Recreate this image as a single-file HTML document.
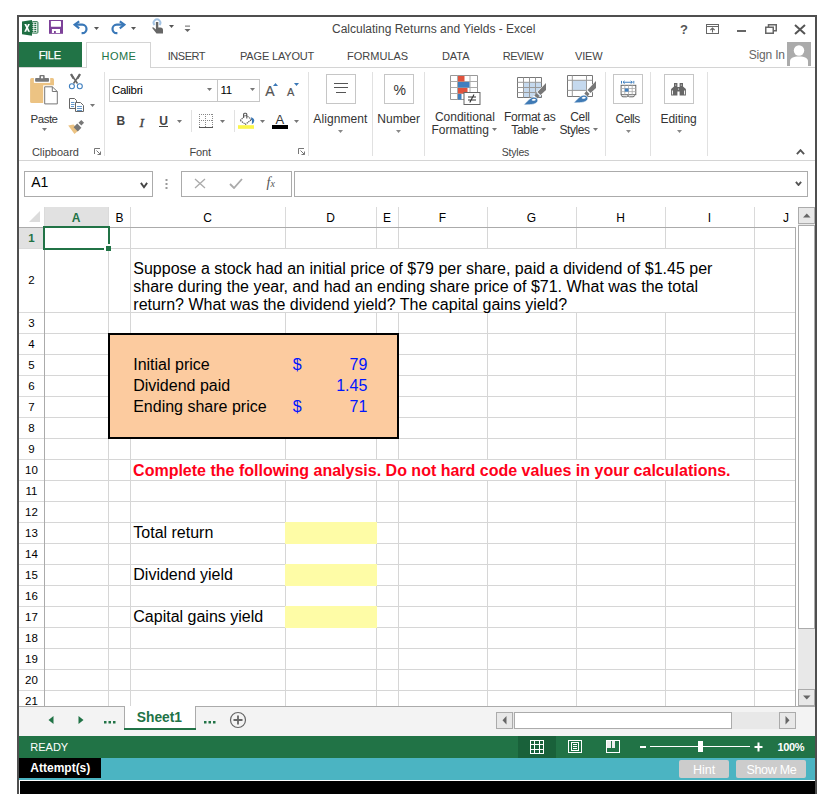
<!DOCTYPE html>
<html><head><meta charset="utf-8">
<style>
*{margin:0;padding:0;box-sizing:border-box}
html,body{width:832px;height:794px;overflow:hidden;background:#fff;font-family:"Liberation Sans",sans-serif;}
.a{position:absolute;display:block}
.t{position:absolute;white-space:nowrap;line-height:1}
</style></head>
<body>

<div class="a" style="left:17px;top:15px;width:800px;height:2px;background:#4f4f4f;"></div>
<div class="a" style="left:17px;top:15px;width:2px;height:779px;background:#4f4f4f;"></div>
<div class="a" style="left:815px;top:15px;width:2px;height:779px;background:#4f4f4f;"></div>
<svg class="a" style="left:21px;top:19px;" width="18" height="18" viewBox="0 0 18 18">
<rect x="10.9" y="2.7" width="6" height="11.4" rx="0.8" fill="#fff" stroke="#1e6e42" stroke-width="1"/>
<path d="M11 4.4H12.4M11 6.4H12.4M11 8.4H12.4M11 10.4H12.4M11 12.4H12.4M13.3 4.4H15.3M13.3 6.4H15.3M13.3 8.4H15.3M13.3 10.4H15.3M13.3 12.4H15.3" stroke="#1e6e42" stroke-width="1.1"/>
<path d="M1 2.5L11 0.9V16.8L1 15.2Z" fill="#1e6e42"/>
<path d="M3.3 5H5.3L6.1 7.3L7 5H8.9L7.1 8.85L9 12.7H7L6.1 10.3L5.2 12.7H3.2L5.1 8.85Z" fill="#fff"/>
</svg>
<svg class="a" style="left:49px;top:20px;" width="14" height="14" viewBox="0 0 14 14">
<path d="M0 0H14V13.8H0Z" fill="#7d4199"/>
<rect x="1.9" y="1" width="10.1" height="5.8" rx="0.6" fill="#fff"/>
<rect x="2.9" y="9" width="8.1" height="4" fill="#fff"/>
<rect x="5" y="11" width="1.8" height="2" fill="#7d4199"/>
</svg>
<svg class="a" style="left:73px;top:20px;" width="16" height="15" viewBox="0 0 16 15">
<path d="M6.2 1.4L1.6 4.7L6.2 8.3" fill="none" stroke="#3a78b8" stroke-width="2.1" stroke-linejoin="miter"/>
<path d="M2.2 4.7H9.3A4.2 4.2 0 0 1 9.3 13.1H8.6" fill="none" stroke="#3a78b8" stroke-width="2.2"/>
</svg>
<svg class="a" style="left:94px;top:27px;" width="5" height="3" viewBox="0 0 5 3"><path d="M0 0H5L2.5 3Z" fill="#555"/></svg>
<svg class="a" style="left:110px;top:20px;" width="16" height="15" viewBox="0 0 16 15">
<path d="M9.8 1.4L14.4 4.7L9.8 8.3" fill="none" stroke="#3a78b8" stroke-width="2.1" stroke-linejoin="miter"/>
<path d="M13.8 4.7H6.7A4.2 4.2 0 0 0 6.7 13.1H7.4" fill="none" stroke="#3a78b8" stroke-width="2.2"/>
</svg>
<svg class="a" style="left:131px;top:27px;" width="5" height="3" viewBox="0 0 5 3"><path d="M0 0H5L2.5 3Z" fill="#555"/></svg>
<svg class="a" style="left:151px;top:17px;" width="14" height="18" viewBox="0 0 14 18">
<path d="M3.6 8A3.3 3.3 0 1 1 8.4 8" fill="none" stroke="#a3c3e3" stroke-width="2"/>
<rect x="4.9" y="5" width="2.4" height="9" fill="#666"/>
<path d="M1 10.8L2.2 10.2L5 12.5V10.5H9.5Q12 10.5 12 13V16.5H5.5Z" fill="#666"/>
</svg>
<svg class="a" style="left:169px;top:25px;" width="5" height="3" viewBox="0 0 5 3"><path d="M0 0H5L2.5 3Z" fill="#555"/></svg>
<svg class="a" style="left:184px;top:25px;" width="7" height="8" viewBox="0 0 7 8"><rect x="1" y="0.6" width="5" height="1" fill="#666"/><path d="M0.5 4H6.5L3.5 7Z" fill="#666"/></svg>
<div class="t" style="left:332px;top:22.74px;font-size:12px;color:#444;font-weight:normal;">Calculating Returns and Yields - Excel</div>
<div class="t" style="left:680px;top:22.60px;font-size:13px;color:#555;font-weight:bold;">?</div>
<svg class="a" style="left:706px;top:24px;" width="13" height="10" viewBox="0 0 13 10"><rect x="0.5" y="0.5" width="12" height="9" fill="none" stroke="#666"/><path d="M0.5 2.5H12.5" stroke="#666"/><path d="M6.5 8.5V4M4.3 6.2L6.5 4L8.7 6.2" fill="none" stroke="#666" stroke-width="1.1"/></svg>
<div class="a" style="left:737px;top:30px;width:9px;height:2px;background:#666;"></div>
<svg class="a" style="left:765px;top:24px;" width="12" height="10" viewBox="0 0 12 10"><rect x="0.75" y="3.25" width="7.5" height="6" fill="none" stroke="#666" stroke-width="1.5"/><path d="M3.5 3V0.75H11.25V6.75H8.5" fill="none" stroke="#666" stroke-width="1.5"/></svg>
<svg class="a" style="left:794px;top:24px;" width="12" height="11" viewBox="0 0 12 11"><path d="M1 1L11 10M11 1L1 10" stroke="#555" stroke-width="2"/></svg>
<div class="a" style="left:19px;top:42px;width:63px;height:25px;background:#217346;"></div>
<div class="t" style="left:38.7px;top:49.69px;font-size:11px;color:#fff;font-weight:normal;letter-spacing:-0.3px;-webkit-text-stroke:0.25px #fff">FILE</div>
<div class="a" style="left:86px;top:42px;width:65px;height:26px;border:1px solid #d4d4d4;border-bottom:none;background:#fff"></div>
<div class="t" style="left:101.5px;top:51.29px;font-size:11px;color:#217346;font-weight:normal;letter-spacing:0.45px">HOME</div>
<div class="t" style="left:167.7px;top:51.29px;font-size:11px;color:#444;font-weight:normal;letter-spacing:-0.45px">INSERT</div>
<div class="t" style="left:240px;top:51.29px;font-size:11px;color:#444;font-weight:normal;letter-spacing:-0.17px">PAGE LAYOUT</div>
<div class="t" style="left:347.1px;top:51.29px;font-size:11px;color:#444;font-weight:normal;letter-spacing:0px">FORMULAS</div>
<div class="t" style="left:441.9px;top:51.29px;font-size:11px;color:#444;font-weight:normal;letter-spacing:0px">DATA</div>
<div class="t" style="left:502.7px;top:51.29px;font-size:11px;color:#444;font-weight:normal;letter-spacing:-0.5px">REVIEW</div>
<div class="t" style="left:574.9px;top:51.29px;font-size:11px;color:#444;font-weight:normal;letter-spacing:-0.1px">VIEW</div>
<div class="t" style="left:748.8px;top:48.54px;font-size:12px;color:#666;font-weight:normal;letter-spacing:-0.2px">Sign In</div>
<svg class="a" style="left:787px;top:42px;" width="24" height="24" viewBox="0 0 24 24"><rect width="24" height="24" fill="#ababab"/><circle cx="12" cy="8.5" r="5.2" fill="#fff"/><path d="M3 24V19.5C3 16 6 14.5 12 14.5S21 16 21 19.5V24Z" fill="#fff"/></svg>
<div class="a" style="left:151px;top:67px;width:664px;height:1px;background:#d4d4d4;"></div>
<div class="a" style="left:19px;top:67px;width:67px;height:1px;background:#d4d4d4;"></div>
<div class="a" style="left:19px;top:160px;width:796px;height:1px;background:#d4d4d4;"></div>
<div class="a" style="left:104px;top:72px;width:1px;height:84px;background:#e1e1e1;"></div>
<div class="a" style="left:308px;top:72px;width:1px;height:84px;background:#e1e1e1;"></div>
<div class="a" style="left:372px;top:72px;width:1px;height:84px;background:#e1e1e1;"></div>
<div class="a" style="left:424px;top:72px;width:1px;height:84px;background:#e1e1e1;"></div>
<div class="a" style="left:605px;top:72px;width:1px;height:84px;background:#e1e1e1;"></div>
<div class="a" style="left:650px;top:72px;width:1px;height:84px;background:#e1e1e1;"></div>
<div class="a" style="left:707px;top:72px;width:1px;height:84px;background:#e1e1e1;"></div>
<svg class="a" style="left:29px;top:73px;" width="31" height="33" viewBox="0 0 31 33">
<rect x="1.1" y="4.9" width="23.9" height="25.1" rx="1.6" fill="#ecc383"/>
<rect x="4.9" y="4" width="16.3" height="5.9" fill="#fff"/>
<rect x="6.1" y="5.1" width="13.9" height="3.6" rx="0.8" fill="#777"/>
<rect x="10.4" y="2" width="5.3" height="4.5" rx="1" fill="#777"/>
<rect x="12" y="3.3" width="2.1" height="2" fill="#fff"/>
<rect x="14.2" y="12.3" width="16" height="20.2" fill="#fff"/>
<path d="M15.7 13.8H23.3L28.3 18.5V30.9H15.7Z" fill="#fff" stroke="#777" stroke-width="1"/>
<path d="M23.3 13.8V18.5H28.3" fill="none" stroke="#777" stroke-width="1"/>
</svg>
<div class="t" style="left:30.6px;top:113.97px;font-size:11.5px;color:#333;font-weight:normal;letter-spacing:-0.5px">Paste</div>
<svg class="a" style="left:42px;top:128px;" width="5" height="3" viewBox="0 0 5 3"><path d="M0 0H5L2.5 3Z" fill="#777"/></svg>
<svg class="a" style="left:67px;top:73px;" width="17" height="17" viewBox="0 0 17 17">
<path d="M4.2 1.5L10.5 10.5M12.8 1.5L6.5 10.5" stroke="#666" stroke-width="1.6"/>
<path d="M4 1L6.5 5.5M13 1L10.5 5.5" stroke="#666" stroke-width="2.2"/>
<circle cx="4.9" cy="13.2" r="2.5" fill="#fff" stroke="#3f7fbf" stroke-width="1.1"/>
<circle cx="12.8" cy="13.2" r="2.5" fill="#fff" stroke="#3f7fbf" stroke-width="1.1"/>
</svg>
<svg class="a" style="left:68px;top:97px;" width="17" height="15" viewBox="0 0 17 15">
<path d="M1.5 1.5H6.5L8.5 3.5V11.5H1.5Z" fill="#fff" stroke="#666"/>
<path d="M3 5.5H6.5M3 7.5H6.5M3 9.5H6" stroke="#3f7fbf" stroke-width="0.8"/>
<path d="M7.5 5.5H12.5L15.5 8.5V14.5H7.5Z" fill="#fff" stroke="#666"/>
<path d="M9 9.5H14M9 11.5H14M9 13.5H14" stroke="#3f7fbf" stroke-width="0.8"/>
</svg>
<svg class="a" style="left:90px;top:104px;" width="5" height="3" viewBox="0 0 5 3"><path d="M0 0H5L2.5 3Z" fill="#777"/></svg>
<svg class="a" style="left:67px;top:119px;" width="18" height="16" viewBox="0 0 18 16">
<path d="M1.2 6.5L6.5 5.5L12 11L7.5 15Z" fill="#ecc383"/>
<path d="M10.2 4.6L14.4 8.8L10.8 12.4L6.6 8.2Z" fill="#777"/>
<path d="M14.3 0.9L17.1 3.7L14.3 6.5L11.5 3.7Z" fill="#777"/>
</svg>
<div class="t" style="left:31.9px;top:147.39px;font-size:11px;color:#444;font-weight:normal;">Clipboard</div>
<svg class="a" style="left:94px;top:148px;" width="7" height="7" viewBox="0 0 7 7"><path d="M0.5 6V0.5H6" fill="none" stroke="#777"/><path d="M2.5 2.5L6.5 6.5M6.5 3.5V6.5H3.5" fill="none" stroke="#777"/></svg>
<div class="a" style="left:109px;top:79px;width:109px;height:23px;border:1px solid #c6c6c6;background:#fff;"></div>
<div class="a" style="left:217px;top:79px;width:43px;height:23px;border:1px solid #c6c6c6;background:#fff;"></div>
<div class="t" style="left:112px;top:84.77px;font-size:11.5px;color:#000;font-weight:normal;letter-spacing:-0.3px">Calibri</div>
<svg class="a" style="left:207px;top:88px;" width="5" height="3" viewBox="0 0 5 3"><path d="M0 0H5L2.5 3Z" fill="#777"/></svg>
<div class="t" style="left:220.6px;top:84.77px;font-size:11.5px;color:#000;font-weight:normal;letter-spacing:-0.3px">11</div>
<svg class="a" style="left:250px;top:88px;" width="5" height="3" viewBox="0 0 5 3"><path d="M0 0H5L2.5 3Z" fill="#777"/></svg>
<div class="t" style="left:265.2px;top:84.35px;font-size:14px;color:#555;font-weight:normal;-webkit-text-stroke:0.2px #555">A</div>
<svg class="a" style="left:273px;top:83px;" width="5" height="3" viewBox="0 0 5 3"><path d="M0 3H5L2.5 0Z" fill="#3a78b8"/></svg>
<div class="t" style="left:287px;top:86.89px;font-size:11px;color:#555;font-weight:normal;-webkit-text-stroke:0.2px #555">A</div>
<svg class="a" style="left:294px;top:83px;" width="5" height="3" viewBox="0 0 5 3"><path d="M0 0H5L2.5 3Z" fill="#3a78b8"/></svg>
<div class="t" style="left:116.4px;top:115.34px;font-size:12px;color:#444;font-weight:bold;">B</div>
<div class="t" style="left:139.5px;top:115.64px;font-size:12px;color:#444;font-weight:normal;font-style:italic;font-family:'Liberation Serif',serif;font-size:13.5px;-webkit-text-stroke:0.35px #444">I</div>
<div class="t" style="left:159.3px;top:115.34px;font-size:12px;color:#444;font-weight:bold;text-decoration:none">U</div>
<div class="a" style="left:159px;top:126px;width:9px;height:1px;background:#444;"></div>
<svg class="a" style="left:177px;top:120px;" width="5" height="3" viewBox="0 0 5 3"><path d="M0 0H5L2.5 3Z" fill="#777"/></svg>
<div class="a" style="left:191px;top:110px;width:1px;height:22px;background:#e1e1e1;"></div>
<svg class="a" style="left:199px;top:114px;" width="14" height="14" viewBox="0 0 14 14"><g shape-rendering="crispEdges"><path d="M0.5 0V13M13.5 0V13M0 0.5H14M6.5 0V13M0 6.5H14" fill="none" stroke="#888" stroke-dasharray="1 1"/><path d="M0 13.5H14" stroke="#555"/></g></svg>
<svg class="a" style="left:220px;top:120px;" width="5" height="3" viewBox="0 0 5 3"><path d="M0 0H5L2.5 3Z" fill="#777"/></svg>
<div class="a" style="left:234px;top:110px;width:1px;height:22px;background:#e1e1e1;"></div>
<svg class="a" style="left:238px;top:112px;" width="18" height="17" viewBox="0 0 18 17">
<path d="M2.2 8.45L7.8 3L13.6 7.5L7.5 12.3Z" fill="#fff" stroke="#555" stroke-width="1.1" stroke-dasharray="1.3 0.7"/>
<path d="M5.6 5.5V2.2Q5.6 1.2 6.6 1.2H7.8Q8.8 1.2 8.8 2.2V6.5" fill="none" stroke="#555" stroke-width="1.1"/>
<path d="M12.8 5.3Q16.2 6 16.3 8.8Q16 11.3 13.8 12.2Q14.6 9 12.8 5.3Z" fill="#3a78b8"/>
<rect x="0" y="13.2" width="16" height="3.6" fill="#fbf64a"/>
</svg>
<svg class="a" style="left:260px;top:120px;" width="5" height="3" viewBox="0 0 5 3"><path d="M0 0H5L2.5 3Z" fill="#777"/></svg>
<div class="t" style="left:275.4px;top:113.30px;font-size:13px;color:#333;font-weight:normal;">A</div>
<div class="a" style="left:272px;top:125px;width:16px;height:4px;background:#000;"></div>
<svg class="a" style="left:294px;top:120px;" width="5" height="3" viewBox="0 0 5 3"><path d="M0 0H5L2.5 3Z" fill="#777"/></svg>
<div class="t" style="left:189.6px;top:147.49px;font-size:11px;color:#444;font-weight:normal;letter-spacing:-0.2px">Font</div>
<svg class="a" style="left:298px;top:148px;" width="7" height="7" viewBox="0 0 7 7"><path d="M0.5 6V0.5H6" fill="none" stroke="#777"/><path d="M2.5 2.5L6.5 6.5M6.5 3.5V6.5H3.5" fill="none" stroke="#777"/></svg>
<div class="a" style="left:326px;top:74px;width:30px;height:30px;border:1px solid #c6c6c6;background:#fff;"></div>
<svg class="a" style="left:333px;top:82px;" width="16" height="12" viewBox="0 0 16 12"><path d="M1 1.5H15M1 5.5H15M3 10.5H13" stroke="#555" stroke-width="1"/></svg>
<div class="t" style="left:313.3px;top:113.44px;font-size:12px;color:#333;font-weight:normal;letter-spacing:0.1px">Alignment</div>
<svg class="a" style="left:338px;top:130px;" width="5" height="3" viewBox="0 0 5 3"><path d="M0 0H5L2.5 3Z" fill="#888"/></svg>
<div class="a" style="left:384px;top:74px;width:30px;height:30px;border:1px solid #c6c6c6;background:#fff;"></div>
<div class="t" style="left:393.4px;top:83.15px;font-size:14px;color:#333;font-weight:normal;">%</div>
<div class="t" style="left:377.3px;top:113.44px;font-size:12px;color:#333;font-weight:normal;">Number</div>
<svg class="a" style="left:396px;top:130px;" width="5" height="3" viewBox="0 0 5 3"><path d="M0 0H5L2.5 3Z" fill="#888"/></svg>
<svg class="a" style="left:450px;top:75px;" width="31" height="31" viewBox="0 0 31 31">
<path d="M0.5 0.5H27.5V24.5H0.5Z" fill="#fff" stroke="#999"/>
<path d="M0.5 6.5H27.5M0.5 12.5H27.5M0.5 18.5H27.5M7.5 0.5V24.5M20 0.5V24.5" stroke="#aaa"/>
<rect x="8" y="1" width="6.5" height="5.5" fill="#e0533d"/>
<rect x="8" y="7" width="11.5" height="5.5" fill="#3f7fbf"/>
<rect x="8" y="13" width="9.5" height="5.5" fill="#e0533d"/>
<rect x="8" y="19" width="3.5" height="5.5" fill="#3f7fbf"/>
<rect x="14" y="17.5" width="16" height="12" fill="#fff" stroke="#666"/>
<path d="M18 22H26M18 25H26M24 19.5L19.8 27.5" stroke="#333" stroke-width="1.1"/>
</svg>
<div class="t" style="left:434.9px;top:110.94px;font-size:12px;color:#333;font-weight:normal;">Conditional</div>
<div class="t" style="left:431.5px;top:123.64px;font-size:12px;color:#333;font-weight:normal;">Formatting</div>
<svg class="a" style="left:492px;top:128px;" width="5" height="3" viewBox="0 0 5 3"><path d="M0 0H5L2.5 3Z" fill="#777"/></svg>
<svg class="a" style="left:517px;top:76px;" width="26" height="23" viewBox="0 0 26 23">
<rect x="6.5" y="6.3" width="18" height="15.2" fill="#c5d9ee"/>
<path d="M0.5 1.5H24.5V21.5H0.5Z" fill="none" stroke="#777"/>
<path d="M0.5 6.3H24.5M0.5 11.5H24.5M0.5 16.5H24.5M6.5 1.5V21.5M12.5 1.5V21.5M18.5 1.5V21.5" stroke="#999"/>
</svg>
<svg class="a" style="left:521.7px;top:81.8px;" width="26" height="25" viewBox="0 0 26 25"><g transform="translate(24 1)">
<path d="M0.5 -0.5L0.5 7.5L-5.5 13L-9.5 9Z" fill="#fff"/>
<path d="M0 0L0 7L-5.5 12L-8.5 9Z" fill="#777"/>
<path d="M-7 13.5L-10 10.5L-13 13.5L-10 16.5Z" fill="#fff"/>
<path d="M-6.5 13L-9.5 10L-11.7 12.5L-8.7 15.5Z" fill="#777"/>
<path d="M-22.2 21.9C-19 18 -15.5 14.5 -12.5 14.2C-9.5 14 -7.5 16 -8.5 18.5C-9.5 21 -14 21.9 -22.2 21.9Z" fill="#3f7ab5" stroke="#fff" stroke-width="0.6"/>
<path d="M-14.5 17Q-12 14.8 -10 16.8Q-11.8 18.8 -14.5 17Z" fill="#fff"/>
</g></svg>
<div class="t" style="left:504.1px;top:110.94px;font-size:12px;color:#333;font-weight:normal;letter-spacing:-0.3px">Format as</div>
<div class="t" style="left:511.3px;top:123.64px;font-size:12px;color:#333;font-weight:normal;letter-spacing:-0.3px">Table</div>
<svg class="a" style="left:541px;top:128px;" width="5" height="3" viewBox="0 0 5 3"><path d="M0 0H5L2.5 3Z" fill="#777"/></svg>
<svg class="a" style="left:567px;top:75px;" width="27" height="23" viewBox="0 0 27 23">
<rect x="5.3" y="5.3" width="14.2" height="10.1" fill="#c5d9ee"/>
<path d="M0.5 0.5H25.5V21.5H0.5Z" fill="none" stroke="#777"/>
<path d="M0.5 5.3H25.5M0.5 15.4H25.5M5.3 0.5V21.5M19.5 0.5V21.5" stroke="#999"/>
</svg>
<svg class="a" style="left:571.7px;top:79.8px;" width="26" height="25" viewBox="0 0 26 25"><g transform="translate(24 1)">
<path d="M0.5 -0.5L0.5 7.5L-5.5 13L-9.5 9Z" fill="#fff"/>
<path d="M0 0L0 7L-5.5 12L-8.5 9Z" fill="#777"/>
<path d="M-7 13.5L-10 10.5L-13 13.5L-10 16.5Z" fill="#fff"/>
<path d="M-6.5 13L-9.5 10L-11.7 12.5L-8.7 15.5Z" fill="#777"/>
<path d="M-22.2 21.9C-19 18 -15.5 14.5 -12.5 14.2C-9.5 14 -7.5 16 -8.5 18.5C-9.5 21 -14 21.9 -22.2 21.9Z" fill="#3f7ab5" stroke="#fff" stroke-width="0.6"/>
<path d="M-14.5 17Q-12 14.8 -10 16.8Q-11.8 18.8 -14.5 17Z" fill="#fff"/>
</g></svg>
<div class="t" style="left:570.2px;top:110.94px;font-size:12px;color:#333;font-weight:normal;letter-spacing:-0.3px">Cell</div>
<div class="t" style="left:559.4px;top:123.64px;font-size:12px;color:#333;font-weight:normal;letter-spacing:-0.4px">Styles</div>
<svg class="a" style="left:593px;top:128px;" width="5" height="3" viewBox="0 0 5 3"><path d="M0 0H5L2.5 3Z" fill="#777"/></svg>
<div class="t" style="left:501.7px;top:146.51px;font-size:10.5px;color:#444;font-weight:normal;letter-spacing:-0.2px">Styles</div>
<div class="a" style="left:613px;top:74px;width:30px;height:30px;border:1px solid #c6c6c6;background:#fff;"></div>
<svg class="a" style="left:620px;top:80px;" width="17" height="18" viewBox="0 0 17 18">
<path d="M1.5 0.9V3.6M13.8 0.9V3.6M3 2.25H12.3" stroke="#3f7fbf" stroke-width="1"/>
<path d="M4.6 0.9L3 2.25L4.6 3.6M10.7 0.9L12.3 2.25L10.7 3.6" fill="none" stroke="#3f7fbf" stroke-width="1"/>
<rect x="1.1" y="5.3" width="14.7" height="9.4" fill="#fff" stroke="#666" stroke-width="1"/>
<path d="M4.8 5.3V14.7M8.5 5.3V14.7M12.2 5.3V14.7M1.1 8.5H15.8M1.1 11.6H15.8" stroke="#aaa" stroke-width="0.8"/>
<rect x="4.8" y="8.5" width="3.7" height="3.1" fill="#3f7fbf"/>
<path d="M1.5 15.3Q1.5 16.8 3 16.8H6.5Q8 16.8 8 15.3Q8 16.8 9.5 16.8H13Q14.5 16.8 14.5 15.3" fill="none" stroke="#666" stroke-width="1"/>
</svg>
<div class="t" style="left:615.6px;top:113.34px;font-size:12px;color:#333;font-weight:normal;letter-spacing:-0.5px">Cells</div>
<svg class="a" style="left:626px;top:130px;" width="5" height="3" viewBox="0 0 5 3"><path d="M0 0H5L2.5 3Z" fill="#888"/></svg>
<div class="a" style="left:664px;top:74px;width:30px;height:30px;border:1px solid #c6c6c6;background:#fff;"></div>
<svg class="a" style="left:670px;top:82px;" width="17" height="15" viewBox="0 0 17 15">
<path d="M1.1 7L4 4.5V1.1H7.4V13.6H1.1Z" fill="#666"/>
<path d="M15.9 7L13 4.5V1.1H9.6V13.6H15.9Z" fill="#666"/>
<rect x="7" y="5" width="3" height="4.5" fill="#666"/>
<path d="M2.5 8.5V12.5M14.5 8.5V12.5" stroke="#fff" stroke-width="0.9"/>
<circle cx="5.7" cy="3" r="0.6" fill="#fff"/><circle cx="11.3" cy="3" r="0.6" fill="#fff"/>
<circle cx="8.5" cy="7" r="0.6" fill="#fff"/>
</svg>
<div class="t" style="left:660.6px;top:113.34px;font-size:12px;color:#333;font-weight:normal;letter-spacing:-0.1px">Editing</div>
<svg class="a" style="left:677px;top:130px;" width="5" height="3" viewBox="0 0 5 3"><path d="M0 0H5L2.5 3Z" fill="#888"/></svg>
<svg class="a" style="left:796px;top:149px;" width="9" height="6" viewBox="0 0 9 6"><path d="M0.9 5.1L4.5 1.2L8.1 5.1" fill="none" stroke="#555" stroke-width="1.9"/></svg>
<div class="a" style="left:24px;top:171px;width:129px;height:26px;border:1px solid #ababab;background:#fff;"></div>
<div class="t" style="left:31.2px;top:175.05px;font-size:14px;color:#000;font-weight:normal;">A1</div>
<svg class="a" style="left:139.5px;top:181.5px;" width="8" height="7" viewBox="0 0 8 7"><path d="M0.9 0.9L4 5.2L7.1 0.9" fill="none" stroke="#444" stroke-width="1.9"/></svg>
<svg class="a" style="left:164.5px;top:179px;" width="4" height="10" viewBox="0 0 4 10"><rect x="0.5" y="0" width="2" height="2" fill="#999"/><rect x="0.5" y="4" width="2" height="2" fill="#999"/><rect x="0.5" y="8" width="2" height="2" fill="#999"/></svg>
<div class="a" style="left:181px;top:171px;width:111px;height:26px;border:1px solid #ababab;background:#fff;"></div>
<svg class="a" style="left:194px;top:178px;" width="12" height="11" viewBox="0 0 12 11"><path d="M1 1L11 10M11 1L1 10" stroke="#aaa" stroke-width="1.3"/></svg>
<svg class="a" style="left:229px;top:178px;" width="14" height="11" viewBox="0 0 14 11"><path d="M1 6L5 10L13 1" fill="none" stroke="#aaa" stroke-width="1.8"/></svg>
<div class="t" style="left:266.5px;top:175.65px;font-size:14px;color:#555;font-weight:normal;font-family:'Liberation Serif',serif;font-style:italic">f<span style="font-size:10px">x</span></div>
<div class="a" style="left:294px;top:171px;width:514px;height:26px;border:1px solid #ababab;background:#fff;"></div>
<svg class="a" style="left:795px;top:181px;" width="8" height="5" viewBox="0 0 8 5"><path d="M0.9 0.9L3.5 4L6.1 0.9" fill="none" stroke="#555" stroke-width="1.9"/></svg>
<div class="a" style="left:45px;top:207px;width:63px;height:20px;background:#e1e1e1;"></div>
<div class="a" style="left:19px;top:228px;width:25px;height:20px;background:#e1e1e1;"></div>
<svg class="a" style="left:28px;top:210px;" width="13" height="13" viewBox="0 0 13 13"><path d="M12 1V12H1Z" fill="#dcdcdc"/></svg>
<div class="a" style="left:108px;top:207px;width:1px;height:20px;background:#dadada;"></div>
<div class="a" style="left:130px;top:207px;width:1px;height:20px;background:#dadada;"></div>
<div class="a" style="left:285px;top:207px;width:1px;height:20px;background:#dadada;"></div>
<div class="a" style="left:376px;top:207px;width:1px;height:20px;background:#dadada;"></div>
<div class="a" style="left:398px;top:207px;width:1px;height:20px;background:#dadada;"></div>
<div class="a" style="left:487px;top:207px;width:1px;height:20px;background:#dadada;"></div>
<div class="a" style="left:576px;top:207px;width:1px;height:20px;background:#dadada;"></div>
<div class="a" style="left:665px;top:207px;width:1px;height:20px;background:#dadada;"></div>
<div class="a" style="left:754px;top:207px;width:1px;height:20px;background:#dadada;"></div>
<div class="a" style="left:44px;top:207px;width:1px;height:20px;background:#dadada;"></div>
<div class="a" style="left:19px;top:227px;width:777px;height:1px;background:#ababab;"></div>
<div class="a" style="left:44px;top:227px;width:1px;height:479px;background:#ababab;"></div>
<div class="a" style="left:19px;top:248px;width:25px;height:1px;background:#dadada;"></div>
<div class="a" style="left:45px;top:248px;width:750px;height:1px;background:#d6d6d6;"></div>
<div class="a" style="left:19px;top:312px;width:25px;height:1px;background:#dadada;"></div>
<div class="a" style="left:45px;top:312px;width:750px;height:1px;background:#d6d6d6;"></div>
<div class="a" style="left:19px;top:333px;width:25px;height:1px;background:#dadada;"></div>
<div class="a" style="left:45px;top:333px;width:750px;height:1px;background:#d6d6d6;"></div>
<div class="a" style="left:19px;top:354px;width:25px;height:1px;background:#dadada;"></div>
<div class="a" style="left:45px;top:354px;width:750px;height:1px;background:#d6d6d6;"></div>
<div class="a" style="left:19px;top:375px;width:25px;height:1px;background:#dadada;"></div>
<div class="a" style="left:45px;top:375px;width:750px;height:1px;background:#d6d6d6;"></div>
<div class="a" style="left:19px;top:396px;width:25px;height:1px;background:#dadada;"></div>
<div class="a" style="left:45px;top:396px;width:750px;height:1px;background:#d6d6d6;"></div>
<div class="a" style="left:19px;top:417px;width:25px;height:1px;background:#dadada;"></div>
<div class="a" style="left:45px;top:417px;width:750px;height:1px;background:#d6d6d6;"></div>
<div class="a" style="left:19px;top:438px;width:25px;height:1px;background:#dadada;"></div>
<div class="a" style="left:45px;top:438px;width:750px;height:1px;background:#d6d6d6;"></div>
<div class="a" style="left:19px;top:459px;width:25px;height:1px;background:#dadada;"></div>
<div class="a" style="left:45px;top:459px;width:750px;height:1px;background:#d6d6d6;"></div>
<div class="a" style="left:19px;top:480px;width:25px;height:1px;background:#dadada;"></div>
<div class="a" style="left:45px;top:480px;width:750px;height:1px;background:#d6d6d6;"></div>
<div class="a" style="left:19px;top:501px;width:25px;height:1px;background:#dadada;"></div>
<div class="a" style="left:45px;top:501px;width:750px;height:1px;background:#d6d6d6;"></div>
<div class="a" style="left:19px;top:522px;width:25px;height:1px;background:#dadada;"></div>
<div class="a" style="left:45px;top:522px;width:750px;height:1px;background:#d6d6d6;"></div>
<div class="a" style="left:19px;top:543px;width:25px;height:1px;background:#dadada;"></div>
<div class="a" style="left:45px;top:543px;width:750px;height:1px;background:#d6d6d6;"></div>
<div class="a" style="left:19px;top:564px;width:25px;height:1px;background:#dadada;"></div>
<div class="a" style="left:45px;top:564px;width:750px;height:1px;background:#d6d6d6;"></div>
<div class="a" style="left:19px;top:585px;width:25px;height:1px;background:#dadada;"></div>
<div class="a" style="left:45px;top:585px;width:750px;height:1px;background:#d6d6d6;"></div>
<div class="a" style="left:19px;top:606px;width:25px;height:1px;background:#dadada;"></div>
<div class="a" style="left:45px;top:606px;width:750px;height:1px;background:#d6d6d6;"></div>
<div class="a" style="left:19px;top:627px;width:25px;height:1px;background:#dadada;"></div>
<div class="a" style="left:45px;top:627px;width:750px;height:1px;background:#d6d6d6;"></div>
<div class="a" style="left:19px;top:648px;width:25px;height:1px;background:#dadada;"></div>
<div class="a" style="left:45px;top:648px;width:750px;height:1px;background:#d6d6d6;"></div>
<div class="a" style="left:19px;top:669px;width:25px;height:1px;background:#dadada;"></div>
<div class="a" style="left:45px;top:669px;width:750px;height:1px;background:#d6d6d6;"></div>
<div class="a" style="left:19px;top:690px;width:25px;height:1px;background:#dadada;"></div>
<div class="a" style="left:45px;top:690px;width:750px;height:1px;background:#d6d6d6;"></div>
<div class="a" style="left:108px;top:228px;width:1px;height:478px;background:#d6d6d6;"></div>
<div class="a" style="left:130px;top:228px;width:1px;height:478px;background:#d6d6d6;"></div>
<div class="a" style="left:285px;top:228px;width:1px;height:21px;background:#d6d6d6;"></div>
<div class="a" style="left:285px;top:312px;width:1px;height:147px;background:#d6d6d6;"></div>
<div class="a" style="left:285px;top:480px;width:1px;height:226px;background:#d6d6d6;"></div>
<div class="a" style="left:376px;top:228px;width:1px;height:21px;background:#d6d6d6;"></div>
<div class="a" style="left:376px;top:312px;width:1px;height:147px;background:#d6d6d6;"></div>
<div class="a" style="left:376px;top:480px;width:1px;height:226px;background:#d6d6d6;"></div>
<div class="a" style="left:398px;top:228px;width:1px;height:21px;background:#d6d6d6;"></div>
<div class="a" style="left:398px;top:312px;width:1px;height:147px;background:#d6d6d6;"></div>
<div class="a" style="left:398px;top:480px;width:1px;height:226px;background:#d6d6d6;"></div>
<div class="a" style="left:487px;top:228px;width:1px;height:21px;background:#d6d6d6;"></div>
<div class="a" style="left:487px;top:312px;width:1px;height:147px;background:#d6d6d6;"></div>
<div class="a" style="left:487px;top:480px;width:1px;height:226px;background:#d6d6d6;"></div>
<div class="a" style="left:576px;top:228px;width:1px;height:21px;background:#d6d6d6;"></div>
<div class="a" style="left:576px;top:312px;width:1px;height:147px;background:#d6d6d6;"></div>
<div class="a" style="left:576px;top:480px;width:1px;height:226px;background:#d6d6d6;"></div>
<div class="a" style="left:665px;top:228px;width:1px;height:21px;background:#d6d6d6;"></div>
<div class="a" style="left:665px;top:312px;width:1px;height:147px;background:#d6d6d6;"></div>
<div class="a" style="left:665px;top:480px;width:1px;height:226px;background:#d6d6d6;"></div>
<div class="a" style="left:754px;top:228px;width:1px;height:478px;background:#d6d6d6;"></div>
<div class="a" style="left:795px;top:227px;width:1px;height:479px;background:#ababab;"></div>
<div class="t" style="left:-124px;width:400px;text-align:center;top:211.84px;font-size:12px;color:#217346;font-weight:bold;">A</div>
<div class="t" style="left:-80.5px;width:400px;text-align:center;top:211.84px;font-size:12px;color:#000;font-weight:normal;">B</div>
<div class="t" style="left:7.5px;width:400px;text-align:center;top:211.84px;font-size:12px;color:#000;font-weight:normal;">C</div>
<div class="t" style="left:130.5px;width:400px;text-align:center;top:211.84px;font-size:12px;color:#000;font-weight:normal;">D</div>
<div class="t" style="left:187px;width:400px;text-align:center;top:211.84px;font-size:12px;color:#000;font-weight:normal;">E</div>
<div class="t" style="left:242.5px;width:400px;text-align:center;top:211.84px;font-size:12px;color:#000;font-weight:normal;">F</div>
<div class="t" style="left:331.5px;width:400px;text-align:center;top:211.84px;font-size:12px;color:#000;font-weight:normal;">G</div>
<div class="t" style="left:420.5px;width:400px;text-align:center;top:211.84px;font-size:12px;color:#000;font-weight:normal;">H</div>
<div class="t" style="left:509.5px;width:400px;text-align:center;top:211.84px;font-size:12px;color:#000;font-weight:normal;">I</div>
<div class="t" style="left:586px;width:400px;text-align:center;top:211.84px;font-size:12px;color:#000;font-weight:normal;">J</div>
<div class="t" style="left:-168.5px;width:400px;text-align:center;top:232.77px;font-size:11.5px;color:#217346;font-weight:bold;">1</div>
<div class="t" style="left:-168.5px;width:400px;text-align:center;top:275.27px;font-size:11.5px;color:#000;font-weight:normal;">2</div>
<div class="t" style="left:-168.5px;width:400px;text-align:center;top:317.77px;font-size:11.5px;color:#000;font-weight:normal;">3</div>
<div class="t" style="left:-168.5px;width:400px;text-align:center;top:338.77px;font-size:11.5px;color:#000;font-weight:normal;">4</div>
<div class="t" style="left:-168.5px;width:400px;text-align:center;top:359.77px;font-size:11.5px;color:#000;font-weight:normal;">5</div>
<div class="t" style="left:-168.5px;width:400px;text-align:center;top:380.77px;font-size:11.5px;color:#000;font-weight:normal;">6</div>
<div class="t" style="left:-168.5px;width:400px;text-align:center;top:401.77px;font-size:11.5px;color:#000;font-weight:normal;">7</div>
<div class="t" style="left:-168.5px;width:400px;text-align:center;top:422.77px;font-size:11.5px;color:#000;font-weight:normal;">8</div>
<div class="t" style="left:-168.5px;width:400px;text-align:center;top:443.77px;font-size:11.5px;color:#000;font-weight:normal;">9</div>
<div class="t" style="left:-168.5px;width:400px;text-align:center;top:464.77px;font-size:11.5px;color:#000;font-weight:normal;">10</div>
<div class="t" style="left:-168.5px;width:400px;text-align:center;top:485.77px;font-size:11.5px;color:#000;font-weight:normal;">11</div>
<div class="t" style="left:-168.5px;width:400px;text-align:center;top:506.77px;font-size:11.5px;color:#000;font-weight:normal;">12</div>
<div class="t" style="left:-168.5px;width:400px;text-align:center;top:527.77px;font-size:11.5px;color:#000;font-weight:normal;">13</div>
<div class="t" style="left:-168.5px;width:400px;text-align:center;top:548.77px;font-size:11.5px;color:#000;font-weight:normal;">14</div>
<div class="t" style="left:-168.5px;width:400px;text-align:center;top:569.77px;font-size:11.5px;color:#000;font-weight:normal;">15</div>
<div class="t" style="left:-168.5px;width:400px;text-align:center;top:590.77px;font-size:11.5px;color:#000;font-weight:normal;">16</div>
<div class="t" style="left:-168.5px;width:400px;text-align:center;top:611.77px;font-size:11.5px;color:#000;font-weight:normal;">17</div>
<div class="t" style="left:-168.5px;width:400px;text-align:center;top:632.77px;font-size:11.5px;color:#000;font-weight:normal;">18</div>
<div class="t" style="left:-168.5px;width:400px;text-align:center;top:653.77px;font-size:11.5px;color:#000;font-weight:normal;">19</div>
<div class="t" style="left:-168.5px;width:400px;text-align:center;top:674.77px;font-size:11.5px;color:#000;font-weight:normal;">20</div>
<div class="t" style="left:-168.5px;width:400px;text-align:center;top:695.77px;font-size:11.5px;color:#000;font-weight:normal;">21</div>
<div class="t" style="left:133.3px;top:261.11px;font-size:16px;color:#000;font-weight:normal;">Suppose a stock had an initial price of $79 per share, paid a dividend of $1.45 per</div>
<div class="t" style="left:133.3px;top:278.96px;font-size:16px;color:#000;font-weight:normal;">share during the year, and had an ending share price of $71. What was the total</div>
<div class="t" style="left:133.3px;top:296.66px;font-size:16px;color:#000;font-weight:normal;">return? What was the dividend yield? The capital gains yield?</div>
<div class="a" style="left:108px;top:333px;width:291px;height:106px;border:2px solid #000;background:#fccb9f"></div>
<div class="t" style="left:133.2px;top:357.16px;font-size:16px;color:#000;font-weight:normal;">Initial price</div>
<div class="t" style="left:133.2px;top:377.76px;font-size:16px;color:#000;font-weight:normal;">Dividend paid</div>
<div class="t" style="left:133.2px;top:398.96px;font-size:16px;color:#000;font-weight:normal;">Ending share price</div>
<div class="t" style="left:292.7px;top:357.16px;font-size:16px;color:#0016ff;font-weight:normal;">$</div>
<div class="t" style="left:292.7px;top:398.96px;font-size:16px;color:#0016ff;font-weight:normal;">$</div>
<div class="t" style="left:-32.69999999999999px;width:400px;text-align:right;top:357.16px;font-size:16px;color:#0016ff;font-weight:normal;">79</div>
<div class="t" style="left:-32.69999999999999px;width:400px;text-align:right;top:377.76px;font-size:16px;color:#0016ff;font-weight:normal;">1.45</div>
<div class="t" style="left:-32.69999999999999px;width:400px;text-align:right;top:398.96px;font-size:16px;color:#0016ff;font-weight:normal;">71</div>
<div class="t" style="left:133.1px;top:462.66px;font-size:16px;color:#ff0019;font-weight:bold;">Complete the following analysis. Do not hard code values in your calculations.</div>
<div class="a" style="left:285px;top:522px;width:92px;height:22px;background:#fefca6;"></div>
<div class="t" style="left:133.3px;top:524.96px;font-size:16px;color:#000;font-weight:normal;">Total return</div>
<div class="a" style="left:285px;top:564px;width:92px;height:22px;background:#fefca6;"></div>
<div class="t" style="left:133.3px;top:566.96px;font-size:16px;color:#000;font-weight:normal;">Dividend yield</div>
<div class="a" style="left:285px;top:606px;width:92px;height:22px;background:#fefca6;"></div>
<div class="t" style="left:133.3px;top:608.96px;font-size:16px;color:#000;font-weight:normal;">Capital gains yield</div>
<div class="a" style="left:43px;top:226px;width:67px;height:24px;border:2px solid #217346"></div>
<div class="a" style="left:105px;top:244px;width:7px;height:3px;background:#fff;"></div>
<div class="a" style="left:106px;top:246px;width:5px;height:5px;background:#217346;"></div>
<div class="a" style="left:104px;top:248px;width:2px;height:2px;background:#fff;"></div>
<div class="a" style="left:108px;top:244px;width:2px;height:2px;background:#fff;"></div>
<div class="a" style="left:796px;top:207px;width:19px;height:499px;background:#fff;"></div>
<div class="a" style="left:798px;top:207px;width:17px;height:499px;background:#e8e8e8;"></div>
<div class="a" style="left:798px;top:207px;width:17px;height:17px;border:1px solid #ababab;background:#e8e8e8;"></div>
<svg class="a" style="left:803px;top:213px;" width="8" height="5" viewBox="0 0 8 5"><path d="M0 4.5H7.5L3.75 0.5Z" fill="#666"/></svg>
<div class="a" style="left:798px;top:225px;width:17px;height:404px;border:1px solid #ababab;background:#fff;"></div>
<div class="a" style="left:798px;top:689px;width:17px;height:17px;border:1px solid #ababab;background:#e8e8e8;"></div>
<svg class="a" style="left:803px;top:695px;" width="8" height="5" viewBox="0 0 8 5"><path d="M0 0.5H7.5L3.75 4.5Z" fill="#666"/></svg>
<div class="a" style="left:19px;top:706px;width:796px;height:30px;background:#f3f3f3;"></div>
<div class="a" style="left:19px;top:706px;width:796px;height:1px;background:#ababab;"></div>
<svg class="a" style="left:48px;top:716px;" width="6" height="8" viewBox="0 0 6 8"><path d="M5.5 0V8L0.5 4Z" fill="#217346"/></svg>
<svg class="a" style="left:78px;top:716px;" width="6" height="8" viewBox="0 0 6 8"><path d="M0.5 0V8L5.5 4Z" fill="#217346"/></svg>
<svg class="a" style="left:104px;top:721px;" width="12" height="3" viewBox="0 0 12 3"><rect x="0" y="0" width="2.5" height="2.5" fill="#217346"/><rect x="4.5" y="0" width="2.5" height="2.5" fill="#217346"/><rect x="9" y="0" width="2.5" height="2.5" fill="#217346"/></svg>
<div class="a" style="left:124px;top:706px;width:72px;height:24px;border:1px solid #ababab;border-top:none;background:#fff"></div>
<div class="a" style="left:124px;top:728px;width:72px;height:2px;background:#217346;"></div>
<div class="t" style="left:136.8px;top:711.02px;font-size:13.8px;color:#217346;font-weight:bold;">Sheet1</div>
<svg class="a" style="left:204px;top:721px;" width="12" height="3" viewBox="0 0 12 3"><rect x="0" y="0" width="2.5" height="2.5" fill="#217346"/><rect x="4.5" y="0" width="2.5" height="2.5" fill="#217346"/><rect x="9" y="0" width="2.5" height="2.5" fill="#217346"/></svg>
<svg class="a" style="left:229px;top:711px;" width="18" height="18" viewBox="0 0 18 18"><circle cx="9" cy="9" r="7.5" fill="none" stroke="#666" stroke-width="1.2"/><path d="M9 4.5V13.5M4.5 9H13.5" stroke="#666" stroke-width="1.8"/></svg>
<div class="a" style="left:496px;top:712px;width:300px;height:17px;background:#e8e8e8;"></div>
<div class="a" style="left:496px;top:712px;width:17px;height:17px;border:1px solid #ababab;background:#e8e8e8;"></div>
<svg class="a" style="left:502px;top:716px;" width="5" height="9" viewBox="0 0 5 9"><path d="M4.5 0V8.5L0.5 4.25Z" fill="#666"/></svg>
<div class="a" style="left:514px;top:712px;width:218px;height:17px;border:1px solid #ababab;background:#fff;"></div>
<div class="a" style="left:779px;top:712px;width:17px;height:17px;border:1px solid #ababab;background:#e8e8e8;"></div>
<svg class="a" style="left:785px;top:716px;" width="5" height="9" viewBox="0 0 5 9"><path d="M0.5 0V8.5L4.5 4.25Z" fill="#666"/></svg>
<div class="a" style="left:19px;top:736px;width:796px;height:22px;background:#217346;"></div>
<div class="t" style="left:30.3px;top:741.59px;font-size:11px;color:#fff;font-weight:normal;">READY</div>
<div class="a" style="left:518px;top:736px;width:38px;height:22px;background:#19613a;"></div>
<svg class="a" style="left:530px;top:740px;" width="14" height="14" viewBox="0 0 14 14"><path d="M0.5 0.5H13.5V13.5H0.5ZM0.5 4.5H13.5M0.5 9H13.5M4.5 0.5V13.5M9 0.5V13.5" fill="none" stroke="#fff" stroke-width="1" shape-rendering="crispEdges"/></svg>
<svg class="a" style="left:568px;top:740px;" width="15" height="14" viewBox="0 0 15 14"><g shape-rendering="crispEdges"><rect x="0.5" y="0.5" width="13" height="12" fill="none" stroke="#fff"/><rect x="3.5" y="2.5" width="7" height="8" fill="none" stroke="#fff"/><path d="M5 4.5H9M5 6.5H9M5 8.5H9" stroke="#fff"/></g></svg>
<svg class="a" style="left:605px;top:740px;" width="16" height="14" viewBox="0 0 16 14"><g shape-rendering="crispEdges"><rect x="1.5" y="0.5" width="13" height="12" fill="none" stroke="#fff"/><rect x="2" y="1" width="4" height="6.5" fill="#eee"/><rect x="7" y="1" width="3" height="6.5" fill="#eee"/></g></svg>
<div class="a" style="left:640px;top:746px;width:6px;height:2px;background:#fff;"></div>
<div class="a" style="left:650px;top:746px;width:100px;height:1px;background:#fff;"></div>
<div class="a" style="left:698px;top:741px;width:5px;height:11px;background:#fff;"></div>
<svg class="a" style="left:754px;top:741px;" width="9" height="11" viewBox="0 0 9 11"><path d="M4.5 1.5V10.5M0.5 6H8.5" stroke="#fff" stroke-width="2"/></svg>
<div class="t" style="left:777.4px;top:741.89px;font-size:11px;color:#fff;font-weight:bold;letter-spacing:-0.3px">100%</div>
<div class="a" style="left:19px;top:758px;width:796px;height:22px;background:#4bb4c2;"></div>
<div class="a" style="left:19px;top:758px;width:82px;height:20px;background:#000;"></div>
<div class="t" style="left:30.3px;top:761.64px;font-size:12px;color:#fff;font-weight:bold;">Attempt(s)</div>
<div class="a" style="left:679px;top:760px;width:50px;height:18px;background:#cccccc;border-radius:2px"></div>
<div class="t" style="left:693px;top:763.92px;font-size:12.5px;color:#fff;font-weight:normal;">Hint</div>
<div class="a" style="left:736px;top:760px;width:70px;height:18px;background:#cccccc;border-radius:2px"></div>
<div class="t" style="left:746.4px;top:763.92px;font-size:12.5px;color:#fff;font-weight:normal;letter-spacing:-0.3px">Show Me</div>
<div class="a" style="left:19px;top:780px;width:796px;height:1px;background:#fff;"></div>
<div class="a" style="left:20px;top:781px;width:795px;height:13px;background:#000;"></div>
</body></html>
